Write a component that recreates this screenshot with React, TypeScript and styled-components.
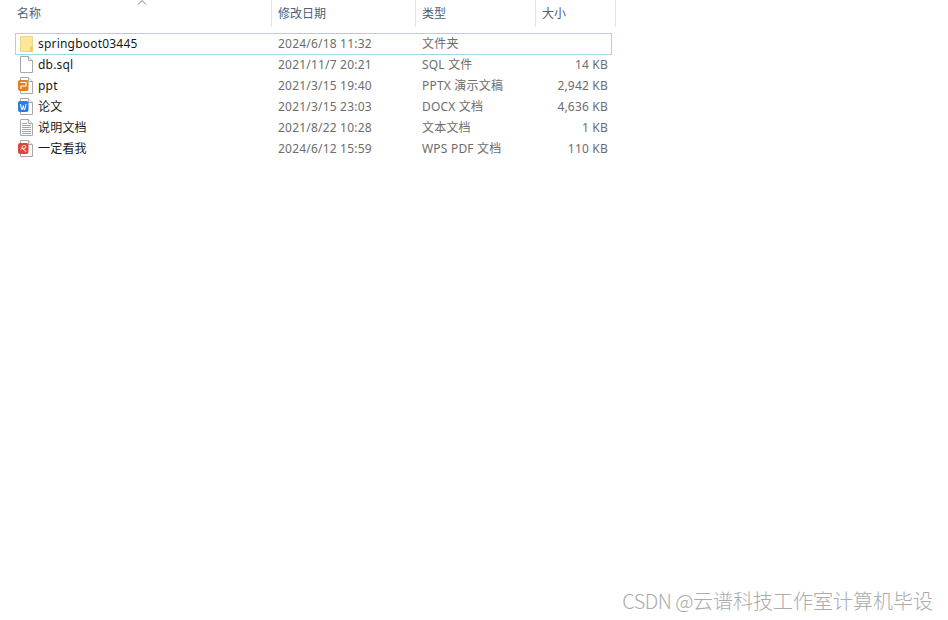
import React from "react";
import styled, { createGlobalStyle } from "styled-components";

const GlobalStyle = createGlobalStyle`
  html, body {
    margin: 0;
    padding: 0;
    background: #ffffff;
  }
  body {
    font-family: "Noto Sans", "Noto Sans CJK SC", sans-serif;
    font-size: 12px;
  }
`;

const Page = styled("div")`
  position: relative;
  width: 948px;
  height: 620px;
  overflow: hidden;
  background: #ffffff;
`;

const Header = styled("div")`
  display: grid;
  grid-template-columns: 257px 144px 120px 80px;
  height: 27px;
  margin-left: 15px;
  margin-bottom: 6px;
`;

const HeaderCell = styled("div")<{ $first?: boolean }>`
  position: relative;
  box-sizing: border-box;
  padding-left: ${(props) => (props.$first ? "2px" : "6px")};
  padding-top: 5px;
  border-right: 1px solid #e5e5e5;
  color: #4c607a;
  font-size: 12px;
  line-height: 17px;
`;

const SortCaret = styled("svg")`
  position: absolute;
  left: 122px;
  top: 0;
`;

const FileList = styled("div")`
  display: flex;
  flex-direction: column;
  width: 597px;
  margin-left: 15px;
`;

const Row = styled("div")<{ $selected?: boolean }>`
  position: relative;
  display: grid;
  grid-template-columns: 257px 144px 120px 76px;
  align-items: center;
  height: 21px;
  line-height: 16px;

  &::after {
    content: "";
    display: ${(props) => (props.$selected ? "block" : "none")};
    position: absolute;
    inset: 0 0 -1px 0;
    border: 1px solid #a3d5e9;
  }
`;

const NameCell = styled("div")`
  display: flex;
  align-items: center;
  gap: 4px;
  padding-left: 3px;
  color: #1a1a1a;
  font-size: 12px;
  letter-spacing: 0.2px;
`;

const IconBox = styled("span")`
  display: flex;
  width: 16px;
  height: 18px;
  flex: none;
`;

const MetaCell = styled("div")`
  padding-left: 6px;
  color: #6d6d6d;
  font-size: 12px;
  letter-spacing: 0.2px;
  white-space: nowrap;
`;

const SizeCell = styled("div")`
  padding-right: 4px;
  color: #6d6d6d;
  font-size: 12px;
  letter-spacing: 0.2px;
  text-align: right;
  white-space: nowrap;
`;

const Watermark = styled("div")`
  position: absolute;
  right: 15px;
  top: 587px;
  color: #ababab;
  font-family: "Noto Sans CJK SC", sans-serif;
  font-size: 20px;
  font-weight: 300;
  line-height: 28px;
  white-space: nowrap;
`;

const WatermarkLatin = styled("span")`
  letter-spacing: -0.5px;
`;

const Sheet = () => (
  <path d="M2.5 .5H10.5L14.5 4.5V16.5H2.5Z" fill="#fff" stroke="#a8a8a8" />
);

const Fold = () => <path d="M10.5 .5V4.5H14.5" fill="#f2f2f2" stroke="#a8a8a8" />;

const FolderIcon = () => (
  <svg width="16" height="18" viewBox="0 0 16 18">
    <path d="M2.5 1.5H14.5V16.5H2.5Z" fill="#ffe596" stroke="#eed690" />
    <path d="M12 11.5H15V17H12Z" fill="#f3cb66" />
  </svg>
);

const PlainIcon = () => (
  <svg width="16" height="18" viewBox="0 0 16 18">
    <Sheet />
    <Fold />
  </svg>
);

const TextIcon = () => (
  <svg width="16" height="18" viewBox="0 0 16 18">
    <Sheet />
    <Fold />
    <path d="M4 4.5H9M4 6.5H13M4 8.5H13M4 10.5H13M4 12.5H13M4 14.5H13" stroke="#a6a6a6" />
  </svg>
);

const BadgeIcon = ({ color, children }: { color: string; children: React.ReactNode }) => (
  <svg width="16" height="18" viewBox="0 0 16 18">
    <Sheet />
    <Fold />
    <rect x="0" y="3" width="10.5" height="11" rx="2" fill={color} />
    {children}
  </svg>
);

const PptIcon = () => (
  <BadgeIcon color="#ee7d16">
    <path d="M2.5 5.5H8V9H3M3 9V12" fill="none" stroke="#fff" strokeWidth="1.2" />
  </BadgeIcon>
);

const WordIcon = () => (
  <BadgeIcon color="#2a7de1">
    <path d="M2.5 6L3.6 11.5H4.4L5.3 7.5L6.1 11.5H6.9L8 6" fill="none" stroke="#fff" strokeWidth="1" />
  </BadgeIcon>
);

const PdfIcon = () => (
  <BadgeIcon color="#e2453c">
    <path d="M2.5 9.5C2.5 7.5 8 9.5 8 7C8 5 4 5 4 7.5C4 10 8 10 8 12" fill="none" stroke="#fff" strokeWidth="1" />
  </BadgeIcon>
);

type FileItem = {
  name: string;
  date: string;
  kind: string;
  size: string;
  icon: React.ReactNode;
};

const files: FileItem[] = [
  { name: "springboot03445", date: "2024/6/18 11:32", kind: "文件夹", size: "", icon: <FolderIcon /> },
  { name: "db.sql", date: "2021/11/7 20:21", kind: "SQL 文件", size: "14 KB", icon: <PlainIcon /> },
  { name: "ppt", date: "2021/3/15 19:40", kind: "PPTX 演示文稿", size: "2,942 KB", icon: <PptIcon /> },
  { name: "论文", date: "2021/3/15 23:03", kind: "DOCX 文档", size: "4,636 KB", icon: <WordIcon /> },
  { name: "说明文档", date: "2021/8/22 10:28", kind: "文本文档", size: "1 KB", icon: <TextIcon /> },
  { name: "一定看我", date: "2024/6/12 15:59", kind: "WPS PDF 文档", size: "110 KB", icon: <PdfIcon /> },
];

export default function App() {
  return (
    <Page>
      <GlobalStyle />
      <Header>
        <HeaderCell $first>
          名称
          <SortCaret width="10" height="5" viewBox="0 0 10 5">
            <path d="M1 4.5L5 .5L9 4.5" fill="none" stroke="#7a7a7a" />
          </SortCaret>
        </HeaderCell>
        <HeaderCell>修改日期</HeaderCell>
        <HeaderCell>类型</HeaderCell>
        <HeaderCell>大小</HeaderCell>
      </Header>
      <FileList>
        {files.map((file, i) => (
          <Row key={file.name} $selected={i === 0}>
            <NameCell>
              <IconBox>{file.icon}</IconBox>
              {file.name}
            </NameCell>
            <MetaCell>{file.date}</MetaCell>
            <MetaCell>{file.kind}</MetaCell>
            <SizeCell>{file.size}</SizeCell>
          </Row>
        ))}
      </FileList>
      <Watermark>
        <WatermarkLatin>CSDN @</WatermarkLatin>云谱科技工作室计算机毕设
      </Watermark>
    </Page>
  );
}
